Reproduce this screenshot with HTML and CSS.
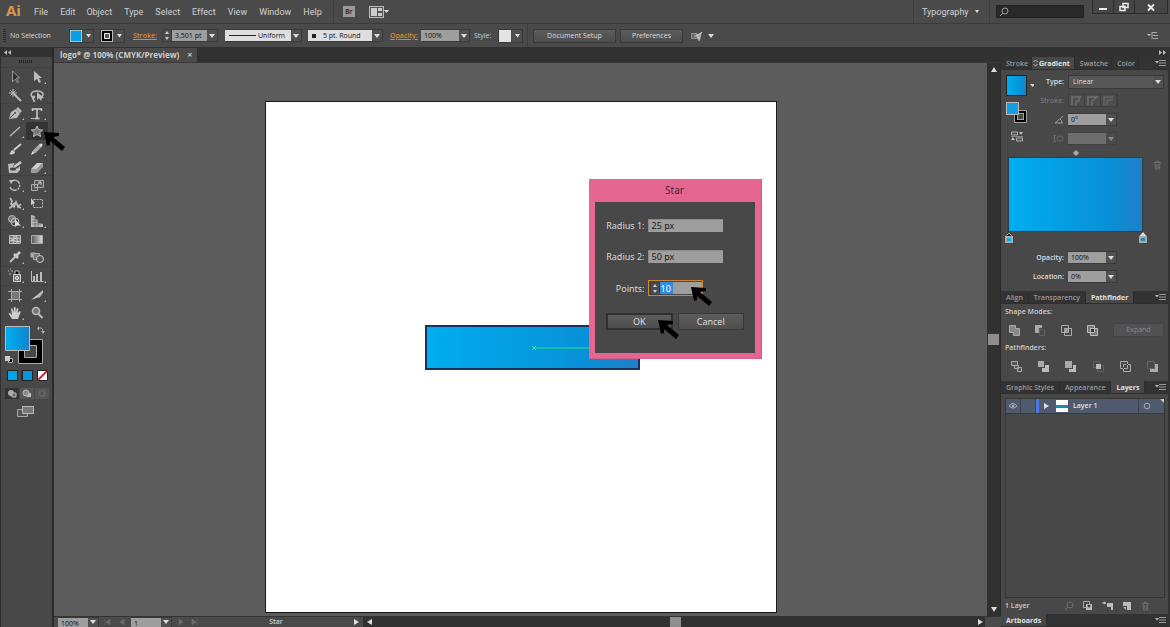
FILE: index.html
```html
<!DOCTYPE html>
<html lang="en">
<head>
<meta charset="utf-8">
<title>logo* @ 100% (CMYK/Preview)</title>
<link rel="stylesheet" href="styles.css">
</head>
<body>
<svg class="defs" aria-hidden="true">
  <defs>
    <linearGradient id="sky" x1="0" x2="1" y1="0" y2="0"><stop offset="0" stop-color="#00aeef"/><stop offset=".75" stop-color="#0890d8"/><stop offset="1" stop-color="#2080c6"/></linearGradient>
    <linearGradient id="grey" x1="0" x2="1" y1="0" y2="0"><stop offset="0" stop-color="#555"/><stop offset="1" stop-color="#ddd"/></linearGradient>
    <symbol id="pointer" viewBox="0 0 22 19"><path d="M0 0L15 1V4L9 5L21 15L18 19L6 9L6 13L3 14Z" fill="#000"/></symbol>
    <symbol id="panel-menu" viewBox="0 0 11 8"><path d="M0 2h4L2 4.500z" fill="#bbb"/><path d="M4 1.500h7M4 4h7M4 6.500h7" stroke="#999" fill="none"/></symbol>
    <symbol id="trash" viewBox="0 0 9 10"><path d="M1 2.500h7M3.500 2V1h2v1M2 3l.5 6h4L7 3M3.700 4v4M5.300 4v4" fill="none" stroke="#6b6b6b"/></symbol>
  </defs>
</svg>
<div class="app">
  <header class="menubar">
    <span class="brand">Ai</span>
    <nav class="menus">
      <button>File</button><button>Edit</button><button>Object</button><button>Type</button><button>Select</button><button>Effect</button><button>View</button><button>Window</button><button>Help</button>
    </nav>
    <i class="rule"></i>
    <button class="bridge" aria-label="Bridge">Br</button>
    <button class="arrange" aria-label="Arrange documents"><svg width="20" height="12"><rect x=".5" y=".5" width="14" height="11" fill="#555" stroke="#bbb"/><path d="M2 2h6v8H2zM9 2h4v3H9zM9 7h4v3H9z" fill="#ccc"/><path d="M15 4h5l-2.500 3z" fill="#ddd"/></svg></button>
    <span class="spring"></span>
    <i class="rule"></i>
    <select class="workspace" aria-label="Workspace"><option>Typography</option></select>
    <i class="rule"></i>
    <label class="search"><svg width="10" height="10"><circle cx="6" cy="4" r="3" fill="none" stroke="#999"/><path d="M4 6L1 9" stroke="#999"/></svg><input type="search" aria-label="Search"></label>
    <div class="window-buttons">
      <button aria-label="Minimize"><svg width="20" height="12"><path d="M6 7h8v2H6z" fill="#eee"/></svg></button>
      <button aria-label="Restore"><svg width="20" height="12"><path d="M9 2.500h5v4H9zM6 5.500h5v4H6z" fill="#454545" stroke="#eee" stroke-width="1.500"/></svg></button>
      <button class="close" aria-label="Close"><svg width="32" height="12"><path d="M13 3.500l6 6M19 3.500l-6 6" stroke="#eee" stroke-width="1.800"/></svg></button>
    </div>
  </header>

  <div class="control-bar">
    <i class="grip"></i>
    <span class="status-label">No Selection</span>
    <button class="swatch-drop" aria-label="Fill"><span class="swatch blue"></span></button>
    <button class="swatch-drop stroke-drop" aria-label="Stroke color"><svg width="12" height="12"><path d="M0 0h12v12H0z" fill="#bbb"/><path d="M1 1h10v10H1z" fill="#000"/><path d="M3.500 3.500h5v5h-5z" fill="#555" stroke="#eee"/></svg></button>
    <label class="link stroke-link" for="stroke-weight">Stroke:</label>
    <span class="stepper"><i class="up"></i><i class="down"></i></span>
    <select id="stroke-weight" class="field weight"><option>3.501 pt</option></select>
    <div class="profile line"><select class="field light" aria-label="Width profile"><option>Uniform</option></select></div>
    <div class="profile dot"><select class="field light" aria-label="Brush"><option>5 pt. Round</option></select></div>
    <label class="link opacity-link" for="opacity">Opacity:</label>
    <select id="opacity" class="field opacity"><option>100%</option></select>
    <span class="style-label">Style:</span>
    <button class="swatch-drop" aria-label="Style"><span class="swatch white"></span></button>
    <i class="rule after-style"></i>
    <button class="push setup">Document Setup</button>
    <button class="push prefs">Preferences</button>
    <button class="similar" aria-label="Select similar"><svg width="24" height="12"><path d="M1.500 3.500h6v5h-6z" fill="#666" stroke="#aaa" stroke-dasharray="2 1"/><path d="M6 4h3l3-2-1 4-1 4-3-1z" fill="#aaa"/><path d="M4 6h5M8 5l4-3M9 7v4" stroke="#ccc"/><path d="M18 4h6l-3 4z" fill="#ddd"/></svg></button>
    <span class="spring"></span>
    <button class="bar-menu" aria-label="Control bar options"><svg width="11" height="9"><path d="M0 3h4L2 5z" fill="#ccc"/><path d="M5 1v7M5 1.500h5M6 4.500h5M6 7.500h5" stroke="#aaa"/></svg></button>
  </div>

  <div class="workarea">
    <aside class="tools">
      <div class="dock-head"><svg width="8" height="5"><path d="M3 0v5L0 2.500zM7 0v5L4 2.500z" fill="#bbb"/></svg></div>
      <i class="tool-grip"></i>
      <div class="group">
        <button class="tool" aria-label="Selection"><svg viewBox="0 0 22 18"><path d="M8.500 3v11l3-3 2 4 1-1-2-4h3z" fill="#2c2c2c" stroke="#999"/></svg></button>
        <button class="tool more" aria-label="Direct selection"><svg viewBox="0 0 22 18"><path d="M8 3v10l3-2 2 4 2-1-2-4h3z" fill="#bbb"/></svg></button>
        <button class="tool" aria-label="Magic wand"><svg viewBox="0 0 22 18"><path d="M10 8l7 7" stroke="#bbb" stroke-width="2"/><path d="M9 3v8M5 7h8M6.500 4.500l5 5M11.500 4.500l-5 5" stroke="#bbb"/></svg></button>
        <button class="tool" aria-label="Lasso"><svg viewBox="0 0 22 18"><path d="M8 12C3 10 5 5 11 5s8 4 4 6M8 12c2-3-3-2-1 1s2 2 0 2" fill="none" stroke="#bbb" stroke-width="1.500"/><path d="M11 6v8l2-2L15 15l1-3h2z" fill="#bbb"/></svg></button>
      </div>
      <div class="group">
        <button class="tool more" aria-label="Pen"><svg viewBox="0 0 22 18"><path d="M5 15L7 8l5-3 4 4-3 5z" fill="#bbb"/><path d="M13 4l4 4" stroke="#bbb" stroke-width="2.500"/><path d="M6 14l4-4" stroke="#444"/><circle cx="11" cy="9" r="1" fill="#444"/></svg></button>
        <button class="tool more" aria-label="Type"><svg viewBox="0 0 22 18"><path d="M6.500 7V5h9v2M11 5v9M8.500 14.500h5" stroke="#ccc" stroke-width="1.500" fill="none"/><path d="M5 14.500h3" stroke="#bbb"/></svg></button>
        <button class="tool more" aria-label="Line segment"><svg viewBox="0 0 22 18"><path d="M6 14L16 5" stroke="#bbb" stroke-width="1.300"/></svg></button>
        <button class="tool active" aria-label="Star"><svg viewBox="0 0 22 18"><path d="M11 4l1.700 3.600 4 .4-3 2.600.9 3.900L11 12.500l-3.600 2 .9-3.900-3-2.600 4-.4z" fill="#777" stroke="#bbb"/></svg><svg class="pointer" width="22" height="19"><use href="#pointer"/></svg></button>
        <button class="tool" aria-label="Paintbrush"><svg viewBox="0 0 22 18"><path d="M10 10l7-6" stroke="#ccc" stroke-width="2"/><path d="M5 14c2 0 1-4 4-4l2 2c0 2-3 3-6 2z" fill="#ccc"/></svg></button>
        <button class="tool more" aria-label="Pencil"><svg viewBox="0 0 22 18"><path d="M8 12l7-7" stroke="#aaa" stroke-width="3.500"/><path d="M5 15l1.500-4 2.500 2z" fill="#ddd"/><circle cx="15" cy="5" r="1.500" fill="#ddd"/></svg></button>
        <button class="tool" aria-label="Blob brush"><svg viewBox="0 0 22 18"><path d="M4 6l7-1-2 3 2 3 3-1 2-2v4l-3 3H5z" fill="#bbb"/><path d="M10 9l7-5" stroke="#ccc" stroke-width="2.500"/><ellipse cx="9" cy="11" rx="3" ry="1.500" fill="#444"/></svg></button>
        <button class="tool more" aria-label="Eraser"><svg viewBox="0 0 22 18"><path d="M5 11l6-6h6l-6 6z" fill="#ccc"/><path d="M5 11h6l6-6v4l-6 6H5z" fill="#999"/></svg></button>
      </div>
      <div class="group">
        <button class="tool more" aria-label="Rotate"><svg viewBox="0 0 22 18"><path d="M8 5a5 5 0 1 1-2 6" fill="none" stroke="#bbb" stroke-width="1.400" stroke-dasharray="9 1 2 1 2 1"/><path d="M5 4l5 0-3 4z" fill="#bbb"/></svg></button>
        <button class="tool more" aria-label="Scale"><svg viewBox="0 0 22 18"><path d="M8.500 4.500h9v7h-9zM5.500 8.500h6v6h-6z" fill="#555" stroke="#aaa"/><path d="M11 9l4-3M12 6h3v3" stroke="#ccc" fill="none"/></svg></button>
        <button class="tool more" aria-label="Width"><svg viewBox="0 0 22 18"><path d="M6 4l2 3-1 3 3 3 2-5 2 5 3-3M5 14c4 0 3-5 6-5s2 4 6 5" fill="none" stroke="#bbb" stroke-width="1.700"/></svg></button>
        <button class="tool" aria-label="Free transform"><svg viewBox="0 0 22 18"><path d="M7.500 5.500h9v8h-9z" fill="none" stroke="#bbb" stroke-dasharray="2 1"/><path d="M5 4v7l4-2z" fill="#ccc"/></svg></button>
        <button class="tool more" aria-label="Shape builder"><svg viewBox="0 0 22 18"><circle cx="8" cy="7" r="3.500" fill="#777" stroke="#bbb"/><circle cx="11" cy="10" r="4" fill="none" stroke="#bbb"/><path d="M11 7v8l2-2 4 1z" fill="#ddd"/></svg></button>
        <button class="tool more" aria-label="Perspective grid"><svg viewBox="0 0 22 18"><path d="M5 3l4 1v3l3 1v3l5 1v3H5z" fill="#bbb"/><path d="M6 6h4M6 9h6M6 12h9M9 4v11M12 8v7" stroke="#666" stroke-width=".7"/></svg></button>
      </div>
      <div class="group">
        <button class="tool" aria-label="Mesh"><svg viewBox="0 0 22 18"><path d="M5.500 5.500h11v8h-11z" fill="#777" stroke="#bbb"/><path d="M9 5c3 3-2 5 1 8M13 5c-3 3 2 5 0 8M6 8c4 3 6-2 10 1M6 11c4-2 6 2 10 0" stroke="#ddd" fill="none"/></svg></button>
        <button class="tool" aria-label="Gradient"><svg viewBox="0 0 22 18"><path d="M5.500 5.500h11v8h-11z" fill="url(#grey)" stroke="#aaa"/></svg></button>
        <button class="tool more" aria-label="Eyedropper"><svg viewBox="0 0 22 18"><path d="M6 14l6-6" stroke="#bbb" stroke-width="2"/><path d="M10 6l4 4M12 8l4-4" stroke="#ccc" stroke-width="2.500"/></svg></button>
        <button class="tool" aria-label="Blend"><svg viewBox="0 0 22 18"><path d="M4.500 4.500h5v5h-5z" fill="#aaa"/><path d="M7.500 5.500h6v6h-6z" fill="#777" stroke="#aaa"/><circle cx="14" cy="11" r="3.500" fill="#555" stroke="#ccc"/></svg></button>
      </div>
      <div class="group gap">
        <button class="tool more" aria-label="Symbol sprayer"><svg viewBox="0 0 22 18"><path d="M9.500 7.500h7v7h-7z" fill="#777" stroke="#ccc"/><path d="M11 7V4h4v3M4 4h1M7 4h2M5 7h2M6 2h1" stroke="#bbb"/><circle cx="13" cy="11" r="1.500" fill="none" stroke="#eee"/></svg></button>
        <button class="tool more" aria-label="Column graph"><svg viewBox="0 0 22 18"><path d="M5.500 4v10.500h12" fill="none" stroke="#bbb"/><path d="M7 9h2v5H7zM10 7h2v7h-2zM14 5h2v9h-2z" fill="#bbb"/></svg></button>
      </div>
      <div class="group gap">
        <button class="tool" aria-label="Artboard"><svg viewBox="0 0 22 18"><path d="M7.500 5.500h8v8h-8z" fill="#777"/><path d="M7.500 3v13M15.500 3v13M4 5.500h14M4 13.500h14" stroke="#aaa"/></svg></button>
        <button class="tool more" aria-label="Slice"><svg viewBox="0 0 22 18"><path d="M5 14l6-5 2 2z" fill="#ccc"/><path d="M11 9l6-5v3l-4 5z" fill="#bbb"/></svg></button>
        <button class="tool more" aria-label="Hand"><svg viewBox="0 0 22 18"><path d="M8 15L4.500 9.500l1.500-.5 2 2L7 4.500h1.500l1 4L10 3h1.500l.3 5 1.200-4 1.400.4L13.600 9l2-2 1.200.8L14 15z" fill="#ccc"/></svg></button>
        <button class="tool" aria-label="Zoom"><svg viewBox="0 0 22 18"><circle cx="10" cy="7" r="3.500" fill="#777" stroke="#bbb" stroke-width="1.500"/><path d="M12.500 10l4 4" stroke="#bbb" stroke-width="2.200"/></svg></button>
      </div>
      <svg class="fill-stroke" width="44" height="42" role="img" aria-label="Fill and stroke"><path d="M14.500 17.500h24v24h-24z" fill="#000" stroke="#aaa"/><path d="M20.500 23.500h12v12h-12z" fill="#484848" stroke="#aaa"/><path d="M1.500 4.500h24v24h-24z" fill="url(#sky)" stroke="#bbb"/><path d="M34 6h3q2 0 2 4" fill="none" stroke="#aaa"/><path d="M35 4v5l-2-2.500zM37 9h4l-2 3z" fill="#aaa"/><path d="M4.500 36.500h4v4h-4z" fill="#000" stroke="#aaa"/><path d="M1 34h5v5H1z" fill="#ccc"/></svg>
      <div class="paint-modes">
        <button aria-label="Color"><svg width="11" height="11"><path d="M.5.500h10v10H.5z" fill="#00a4e8" stroke="#222"/></svg></button>
        <button class="on" aria-label="Gradient"><svg width="11" height="11"><path d="M.5.500h10v10H.5z" fill="#0897dc" stroke="#222"/></svg></button>
        <button aria-label="None"><svg width="11" height="11"><path d="M.5.500h10v10H.5z" fill="#fff" stroke="#222"/><path d="M1 10l9-9" stroke="#c82a3a" stroke-width="2"/></svg></button>
      </div>
      <div class="draw-modes">
        <button class="on" aria-label="Draw normal"><svg width="14" height="11"><circle cx="6" cy="5" r="3" fill="#aaa"/><path d="M7 5h4v4H7z" fill="#666" stroke="#bbb"/></svg></button>
        <button aria-label="Draw behind"><svg width="14" height="11"><path d="M7 5h4v4H7z" fill="#bbb"/><circle cx="6" cy="5" r="3" fill="#888" stroke="#bbb"/></svg></button>
        <button aria-label="Draw inside" disabled><svg width="14" height="11"><circle cx="7" cy="5.500" r="3" fill="none" stroke="#707070"/></svg></button>
      </div>
      <button class="screen-mode" aria-label="Screen mode"><svg width="17" height="13"><path d="M.5 4.500h10v7H.5z" fill="#555" stroke="#aaa"/><path d="M5.500 1.500h11v7h-11z" fill="#777" stroke="#bbb"/></svg></button>
    </aside>

    <main class="document">
      <div class="doc-tabs"><div class="doc-tab">logo* @ 100% (CMYK/Preview)<button aria-label="Close document">×</button></div></div>
      <div class="stage">
        <div class="canvas">
          <div class="artboard">
            <svg class="shape" width="216" height="46"><path d="M1 1h213v43H1z" fill="url(#sky)" stroke="#1b2f5c" stroke-width="2"/><path d="M109 23h60" stroke="#1cc8a0" stroke-width="1.500"/><path d="M107 21l4 4M111 21l-4 4" stroke="#3ddc84"/></svg>
            <form class="dialog" role="dialog" aria-labelledby="dialog-title">
              <h1 id="dialog-title">Star</h1>
              <div class="dialog-body">
                <div class="row"><label for="r1">Radius 1:</label><input id="r1" value="25 px"></div>
                <div class="row"><label for="r2">Radius 2:</label><input id="r2" value="50 px"></div>
                <div class="row"><label for="pts">Points:</label><div class="spin"><span class="stepper"><i class="up"></i><i class="down"></i></span><label class="spin-value" for="pts"><input id="pts" value="10"></label></div></div>
                <div class="actions"><button type="button" class="push ok">OK</button><button type="button" class="push">Cancel</button></div>
              </div>
              <svg class="pointer at-points" width="22" height="19"><use href="#pointer"/></svg>
              <svg class="pointer at-ok" width="22" height="19"><use href="#pointer"/></svg>
            </form>
          </div>
        </div>
        <div class="vscroll"><i class="tri north"></i><i class="thumb"></i><i class="tri south"></i></div>
      </div>
      <footer class="statusbar">
        <select class="field" aria-label="Zoom level"><option>100%</option></select>
        <svg class="nav" width="22" height="10"><path d="M1 2v6M6 2v6L2 5zM20 2v6l-4-3z" fill="#6c6c6c" stroke="#6c6c6c" stroke-width=".6"/></svg>
        <select class="field" aria-label="Artboard"><option>1</option></select>
        <svg class="nav" width="22" height="10"><path d="M2 2v6l4-3zM15 2v6l4-3zM20 2v6" fill="#6c6c6c" stroke="#6c6c6c" stroke-width=".6"/></svg>
        <span class="current-tool">Star</span>
        <i class="tri east"></i>
        <div class="hscroll"><i class="tri west"></i><i class="thumb"></i><i class="tri east"></i></div>
      </footer>
    </main>

    <aside class="panels">
      <div class="dock-head right"><svg width="8" height="5"><path d="M0 0v5l3-2.500zM4 0v5l3-2.500z" fill="#bbb"/></svg></div>
      <div class="tabs t-gradient"><button>Stroke</button><button class="on"><svg width="5" height="8"><path d="M.5 3l2-2 2 2M.5 5l2 2 2-2" fill="none" stroke="#bbb"/></svg>Gradient</button><button>Swatche</button><button>Color</button><svg class="pm" width="11" height="8"><use href="#panel-menu"/></svg></div>
      <section class="gradient-panel">
        <div class="settings">
          <div class="side">
            <svg width="28" height="22"><path d="M.5.500h20v20H.5z" fill="url(#sky)" stroke="#222"/><path d="M24 9h5l-2.500 3z" fill="#ddd"/></svg>
            <svg width="28" height="21"><path d="M10 10h9v9h-9z" fill="none" stroke="#bbb" stroke-width="3.500"/><path d="M10 10h9v9h-9z" fill="none" stroke="#000" stroke-width="2"/><path d="M.5.500h12v12H.5z" fill="#12a0e0" stroke="#bbb"/></svg>
            <svg class="reverse" width="12" height="11"><path d="M.5 1h6v3h-6zM5.500 7h6v3h-6z" fill="#555" stroke="#aaa"/><path d="M8 1h4l-2 3zM0 9h4L2 6z" fill="#bbb"/><path d="M0 5.500h12" stroke="#888"/></svg>
          </div>
          <div class="rows">
            <div class="prow"><label for="gtype">Type:</label><select id="gtype" class="field dark"><option>Linear</option></select></div>
            <div class="prow dim"><span class="lbl">Stroke:</span><div class="trio"><button disabled aria-label="Within stroke"><svg width="15" height="11"><path d="M3 10V2h9M7 10V6h3V2" fill="none" stroke="#6e6e6e" stroke-width="1.500"/></svg></button><button disabled aria-label="Along stroke"><svg width="15" height="11"><path d="M3 10V2h9L7 6v4" fill="none" stroke="#6e6e6e" stroke-width="1.500"/></svg></button><button disabled aria-label="Across stroke"><svg width="15" height="11"><path d="M3 10V2h9M6 10V5h6" fill="none" stroke="#6e6e6e"/></svg></button></div></div>
            <div class="prow"><label for="angle" aria-label="Angle"><svg width="10" height="9"><path d="M9 1L1 8h8M6 4q2 1 2 4" fill="none" stroke="#999"/></svg></label><select id="angle" class="field small"><option>0°</option></select></div>
            <div class="prow dim"><label for="ratio" aria-label="Aspect ratio"><svg width="11" height="9"><path d="M1.500 1v7M0 2l1.500-1L3 2M0 7l1.500 1L3 7" fill="none" stroke="#6a6a6a"/><ellipse cx="7" cy="4.500" rx="3" ry="2.500" fill="none" stroke="#6a6a6a"/></svg></label><select id="ratio" class="field small off" disabled><option></option></select></div>
          </div>
        </div>
        <div class="ramp">
          <svg class="mid" width="8" height="8"><path d="M4 1l3 3-3 3-3-3z" fill="#aaa"/></svg>
          <div class="bar"></div>
          <svg class="bin" width="9" height="10"><use href="#trash"/></svg>
          <div class="stops"><svg width="8" height="11"><path d="M1 4l3-3 3 3" fill="#222" stroke="#999"/><path d="M1 5h6v5H1z" fill="#00aeef" stroke="#aaa" stroke-width="2"/></svg><svg width="8" height="11"><path d="M.5 4L4 0l3.500 4z" fill="#ddd"/><path d="M1 5h6v5H1z" fill="#1c80c8" stroke="#aaa" stroke-width="2"/></svg></div>
        </div>
        <div class="prow wide"><label for="gop">Opacity:</label><select id="gop" class="field small"><option>100%</option></select></div>
        <div class="prow wide"><label for="gloc">Location:</label><select id="gloc" class="field small"><option>0%</option></select></div>
      </section>

      <div class="tabs"><button>Align</button><button>Transparency</button><button class="on">Pathfinder</button><svg class="pm" width="11" height="8"><use href="#panel-menu"/></svg></div>
      <section class="pathfinder">
        <h2>Shape Modes:</h2>
        <div class="modes">
          <button aria-label="Unite"><svg width="11" height="11"><path d="M.5.500h6v3h4v7h-6v-3h-4z" fill="#888" stroke="#aaa"/></svg></button>
          <button aria-label="Minus front"><svg width="11" height="11"><path d="M.5.500h6v2h-3v5h-3z" fill="#aaa" stroke="#aaa"/><path d="M4.500 4.500h5v6h-5z" fill="none" stroke="#606060"/></svg></button>
          <button aria-label="Intersect"><svg width="11" height="11"><path d="M.5.500h7v7h-7zM3.500 3.500h7v7h-7z" fill="none" stroke="#aaa"/><path d="M4 4h3v3H4z" fill="#999"/></svg></button>
          <button aria-label="Exclude"><svg width="11" height="11"><path d="M.5.500h7v7h-7zM3.500 3.500h7v7h-7z" fill="#777" stroke="#bbb"/><path d="M4 4h3v3H4z" fill="#333"/></svg></button>
          <button class="push expand" disabled>Expand</button>
        </div>
        <h2>Pathfinders:</h2>
        <div class="finders">
          <button aria-label="Divide"><svg width="11" height="11"><path d="M.5.500h6v4h-6zM3.500 4.500h4v3h-4zM6.500 6.500h4v4h-4z" fill="#555" stroke="#aaa"/></svg></button>
          <button aria-label="Trim"><svg width="11" height="11"><path d="M0 0h6v6H0z" fill="#aaa"/><path d="M7 4h4v7H4V7h3z" fill="#bbb"/></svg></button>
          <button aria-label="Merge"><svg width="11" height="11"><path d="M0 0h7v7H0z" fill="#aaa"/><path d="M8 4h3v7H4V8h4z" fill="#bbb"/></svg></button>
          <button aria-label="Crop"><svg width="11" height="11"><path d="M.5.500h6v6h-6zM4.500 4.500h6v6h-6z" fill="none" stroke="#606060"/><path d="M3 3h5v5H3z" fill="#bbb"/></svg></button>
          <button aria-label="Outline"><svg width="11" height="11"><path d="M3 7.500H.5v-7h7V3M7.500 4v3.500H4M3.500 6V3.500H6M8 3.500h2.500v7h-7V8" fill="none" stroke="#aaa"/></svg></button>
          <button aria-label="Minus back"><svg width="11" height="11"><path d="M.5.500h7v7h-7z" fill="none" stroke="#666"/><path d="M8 3h3v8H3V8h5z" fill="#aaa"/></svg></button>
        </div>
      </section>

      <div class="tabs"><button>Graphic Styles</button><button>Appearance</button><button class="on">Layers</button><svg class="pm" width="11" height="8"><use href="#panel-menu"/></svg></div>
      <section class="layers">
        <div class="layer-list">
          <div class="layer">
            <button class="eye" aria-label="Visibility"><svg width="10" height="8"><path d="M1 4q4-5 8 0-4 4-8 0z" fill="none" stroke="#aaa"/><circle cx="5" cy="4" r="1.300" fill="#aaa"/></svg></button>
            <i class="lock"></i><i class="tint"></i><i class="tri east"></i>
            <svg class="thumbnail" width="12" height="12"><path d="M0 0h12v12H0z" fill="#fff"/><path d="M0 5h12v3H0z" fill="#188cb0"/></svg>
            <span class="layer-name">Layer 1</span>
            <button class="target" aria-label="Target"><svg width="8" height="8"><circle cx="4" cy="4" r="2.800" fill="none" stroke="#aaa"/></svg></button>
            <svg class="corner" width="4" height="4"><path d="M0 0h4v4z" fill="#ccc"/></svg>
          </div>
        </div>
        <div class="layer-foot"><span>1 Layer</span>
          <svg width="10" height="10"><circle cx="6" cy="4" r="3" fill="none" stroke="#6c6c6c"/><path d="M4 6L1 9" stroke="#6c6c6c"/></svg>
          <svg width="10" height="10"><path d="M.5.500h6v6h-6z" fill="#444" stroke="#aaa"/><path d="M3 3h6v6H3z" fill="#bbb"/><circle cx="6" cy="5" r="1.500" fill="#444"/></svg>
          <svg width="11" height="10"><path d="M0 2h3M2 1l2 1-2 1z" stroke="#bbb" fill="#bbb"/><path d="M5 2h6v7H9V6H5z" fill="#bbb"/></svg>
          <svg width="10" height="10"><path d="M1 1h8v8H5V5H1z" fill="#bbb"/><path d="M1 6h3v3z" fill="#aaa"/></svg>
          <svg width="9" height="10"><use href="#trash"/></svg>
        </div>
      </section>
      <div class="tabs"><button class="on">Artboards</button><svg class="pm" width="11" height="8"><use href="#panel-menu"/></svg></div>
    </aside>
  </div>
</div>
</body>
</html>
```

FILE: styles.css
```css
* { box-sizing: border-box; }
body { margin: 0; background: #484848; }
button, input, select { font: inherit; color: inherit; margin: 0; padding: 0; border: 0; background: none; border-radius: 0; outline: 0; }
button { display: flex; align-items: center; justify-content: center; white-space: nowrap; }
svg { display: block; flex: none; }
.defs { position: absolute; width: 0; height: 0; }

.app { height: 100vh; min-width: 900px; display: flex; flex-direction: column; overflow: hidden; color: #ccc; font: 7px/10px "Open Sans", "Noto Sans", sans-serif; }
.spring { flex: 1; }
.rule { width: 1px; align-self: stretch; background: #3e3e3e; }

/* Menu bar */
.menubar { height: 23px; flex: none; display: flex; align-items: center; background: #4a4a4a; font: 9px/12px Roboto, "Noto Sans", sans-serif; color: #d0d0d0; }
.brand { width: 28px; padding: 0 0 3px 6px; font: bold 15px/18px "Open Sans", sans-serif; color: #d9994a; }
.menus { display: flex; gap: 12px; padding: 0 10px 0 6px; }
.menus button:nth-child(n+3) { margin-left: -1px; margin-right: 1px; }
.bridge { margin: 0 14px 0 9px; width: 12px; height: 11px; background: #999; color: #333; font-size: 7px; font-weight: bold; }
.workspace { appearance: none; width: 75px; padding-left: 8px; background: url("data:image/svg+xml,%3Csvg xmlns='http://www.w3.org/2000/svg' width='4' height='3'%3E%3Cpath d='M0 0h4L2 3z' fill='%23ddd'/%3E%3C/svg%3E") no-repeat right 10px center; }
.search { display: flex; align-items: center; gap: 2px; width: 88px; height: 13px; margin: 0 8px 0 6px; padding: 0 2px; background: #292929; border: 1px solid #222; }
.search input { width: 100%; min-width: 0; }
.window-buttons { display: flex; align-self: flex-start; height: 14px; margin-right: 2px; border: 1px solid #2c2c2c; border-top: 0; background: #454545; }
.window-buttons button + button { border-left: 1px solid #2c2c2c; }

/* Control bar */
.control-bar { height: 24px; flex: none; display: flex; align-items: center; background: #4a4a4a; border-top: 1px solid #3b3b3b; }
.control-bar > * { flex: none; }
.control-bar > .spring { flex: 1; }
.grip { width: 3px; height: 14px; margin: 0 4px 0 3px; background: repeating-linear-gradient(#2c2c2c 0 1px, #4a4a4a 1px 2px); }
.status-label { width: 59px; color: #ddd; }
.swatch-drop { width: 25px; height: 14px; justify-content: flex-start; border: 1px solid #383838; background: url("data:image/svg+xml,%3Csvg xmlns='http://www.w3.org/2000/svg' width='5' height='4'%3E%3Cpath d='M0 0h5L2.500 3.500z' fill='%23ddd'/%3E%3C/svg%3E") no-repeat right 2px center #4e4e4e; }
.swatch { width: 12px; height: 12px; }
.swatch.blue { background: #0a9fe6; border: 1px solid #9cc; }
.swatch.white { background: #e4e4e4; }
.stroke-drop { margin: 0 8px 0 6px; }
.link { color: #d98a35; text-decoration: underline; }
.stroke-link { width: 29px; font-weight: 600; }
.opacity-link { width: 31px; margin-left: 7px; font-weight: 600; }
.stepper { display: flex; flex-direction: column; align-items: center; justify-content: center; gap: 3px; width: 10px; height: 13px; border: 1px solid #3c3c3c; background: #4c4c4c; }
.up, .down { border: 2px solid transparent; }
.up { border-top: 0; border-bottom: 3px solid #ccc; }
.down { border-bottom: 0; border-top: 3px solid #ccc; }
.field { appearance: none; height: 13px; padding-left: 3px; font: 7px/11px "Open Sans", "Noto Sans", sans-serif; color: #111; border: 1px solid #3a3a3a; border-left: 0;
  background: url("data:image/svg+xml,%3Csvg xmlns='http://www.w3.org/2000/svg' width='6' height='4'%3E%3Cpath d='M0 0h6L3 4z' fill='%23ddd'/%3E%3C/svg%3E") no-repeat right 2px center, linear-gradient(#505050, #505050) no-repeat right / 10px 100%, #9e9e9e; }
.field.weight { width: 46px; margin-right: 7px; }
.field.opacity { width: 49px; }
.field.light { width: 100%; background-color: #dedede; }
.profile { position: relative; margin-right: 6px; }
.profile::before { content: ""; position: absolute; background: #222; }
.profile.line { width: 77px; }
.profile.line .field { padding-left: 33px; }
.profile.line::before { left: 4px; top: 6px; width: 27px; height: 1px; }
.profile.dot { width: 75px; margin-right: 0; }
.profile.dot .field { padding-left: 15px; }
.profile.dot::before { left: 4px; top: 5px; width: 4px; height: 4px; }
.style-label { width: 28px; padding-left: 4px; }
.after-style { margin: 0 5px 0 4px; }
.push { height: 14px; border: 1px solid #383838; background: linear-gradient(#5c5c5c, #4e4e4e); color: #ddd; }
.setup { width: 83px; margin-right: 4px; }
.prefs { width: 63px; margin-right: 7px; }
.bar-menu { margin-right: 12px; }

/* Work area */
.workarea { flex: 1; min-height: 0; display: flex; }
.dock-head { height: 10px; flex: none; display: flex; align-items: center; padding-left: 3px; background: #323232; }
.dock-head.right { justify-content: flex-end; padding-right: 1px; }

/* Tools */
.tools { position: relative; z-index: 2; width: 54px; flex: none; background: #484848; border-left: 1px solid #303030; border-right: 2px solid #2a2a2a; display: flex; flex-direction: column; }
.tool-grip { width: 14px; height: 3px; margin: 3px 0 5px 18px; background: repeating-linear-gradient(90deg, #222 0 1px, #484848 1px 2px); }
.group { display: grid; grid-template-columns: 22px 22px; padding-left: 3px; box-shadow: 0 -1px #424242; }
.group.gap { margin-top: 1px; }
.tool { position: relative; width: 22px; height: 18px; }
.tool > svg:first-child { width: 22px; height: 18px; }
.tool.more::after { content: ""; position: absolute; right: 2px; bottom: 2px; border: 1px solid #bbb; border-left-color: transparent; border-top-color: transparent; }
.tool.active { background: #333; }
.pointer { position: absolute; }
.tool .pointer { left: 18px; top: 10px; }
.fill-stroke { margin: 0 0 5px 3px; }
.paint-modes { display: flex; gap: 3px; margin: 1px 0 7px 5px; }
.paint-modes button { width: 12px; }
.paint-modes .on { background: #333; }
.draw-modes { display: flex; gap: 1px; margin: 0 0 6px 4px; }
.draw-modes button { background: #555; }
.draw-modes .on { background: #333; }
.screen-mode { align-self: flex-start; margin-left: 16px; }

/* Document */
.document { flex: 1; min-width: 0; display: flex; flex-direction: column; }
.doc-tabs { height: 16px; flex: none; display: flex; padding-top: 1px; background: #313131; border-bottom: 1px solid #383838; }
.doc-tab { display: flex; align-items: center; gap: 8px; padding: 0 5px 0 6px; background: #4a4a4a; font: bold 8px/12px "Open Sans", "Noto Sans", sans-serif; white-space: nowrap; }
.doc-tab button { font-size: 9px; line-height: 10px; }
.stage { flex: 1; min-height: 0; display: flex; }
.canvas { flex: 1; min-width: 0; overflow: hidden; display: flex; justify-content: center; align-items: flex-start; padding-top: 38px; background: #5c5c5c; }
.artboard { position: relative; flex: none; width: 512px; height: 512px; background: #fff; border: 1px solid #1a1a1a; }
.shape { position: absolute; left: 159px; top: 223px; }
.vscroll, .hscroll { display: flex; align-items: center; justify-content: space-between; background: #313131; }
.vscroll { width: 14px; flex: none; flex-direction: column; padding: 4px 0; border-right: 1px solid #2a2a2a; }
.vscroll .thumb, .hscroll .thumb { width: 11px; height: 11px; background: #8e8e8e; }
.tri { width: 0; height: 0; border: 3px solid transparent; }
.tri.north { border-top: 0; border-bottom: 5px solid #ddd; }
.tri.south { border-bottom: 0; border-top: 5px solid #ddd; }
.tri.east { border-right: 0; border-left: 5px solid #ddd; }
.tri.west { border-left: 0; border-right: 5px solid #ddd; }
.statusbar { height: 11px; flex: none; display: flex; align-items: center; padding-left: 4px; background: #4a4a4a; border-top: 1px solid #333; }
.statusbar .field { width: 41px; height: 11px; }
.nav { margin: 0 5px; }
.current-tool { width: 150px; padding-right: 6px; text-align: center; font-weight: 600; }
.hscroll { flex: 1; height: 11px; margin-left: 4px; padding: 0 2px 0 4px; margin-right: 16px; }

/* Dialog */
.dialog { position: absolute; left: 323px; top: 77px; width: 173px; padding: 0 6px 5px; background: #e56690; border: 1px solid #d85c86; border-width: 0 1px 1px 0; font: 9px/13px "Noto Sans", sans-serif; }
.dialog h1 { margin: 0; font: 10px/23px "Noto Sans", sans-serif; text-align: center; color: #4a2534; }
.dialog-body { background: #484848; padding: 17px 11px 23px 0; }
.row { display: flex; align-items: center; height: 13px; margin-bottom: 18px; }
.row:nth-child(3) { height: 14px; }
.row > label { width: 50px; margin-right: 3px; flex: none; text-align: right; white-space: nowrap; color: #d8d8d8; }
.row > input { width: 75px; height: 13px; padding: 0 0 2px 3px; background: #9e9e9e; border: 1px solid #8a8a8a; border-width: 1px 0 0 1px; color: #1c1c1c; }
.spin { display: flex; align-items: center; flex: none; height: 16px; width: 55px; padding-left: 1px; border: 1px solid #c98538; }
.spin-value { display: flex; flex: 1; height: 12px; background: #9e9e9e; }
.spin-value input { width: 13px; height: 12px; padding-left: 1px; background: #2f8de4; color: #fff; }
.actions { display: flex; gap: 5px; padding-left: 11px; }
.actions .push { flex: 1; height: 17px; }
.actions .ok { border: 2px solid #303030; }
.at-points { left: 102px; top: 108px; }
.at-ok { left: 69px; top: 141px; }

/* Panels */
.panels { width: 169px; flex: none; display: flex; flex-direction: column; background: #484848; border-right: 2px solid #333; }
.tabs { display: flex; height: 13px; flex: none; background: #333; color: #999; border-bottom: 1px solid #2e2e2e; }
.tabs button { padding: 0 5px; border-right: 1px solid #2c2c2c; font-size: 7px; font-weight: 600; line-height: 11px; }
.tabs .on { background: #484848; color: #e0e0e0; font-weight: bold; }
.t-gradient button { padding: 0 3px 0 5px; gap: 1px; }
.t-gradient button.on { padding: 0 4px 0 1px; }
.pm { margin: 2px 2px 0 auto; }
.gradient-panel { height: 221px; flex: none; padding: 2px 4px 0 5px; }
.settings { display: flex; }
.side { width: 28px; display: flex; flex-direction: column; gap: 5px; padding-top: 3px; }
.reverse { margin: 3px 0 0 5px; }
.rows { flex: 1; }
.prow { display: flex; align-items: center; height: 19px; }
.prow label, .lbl { display: flex; justify-content: flex-end; width: 30px; margin-right: 4px; flex: none; color: #ddd; font-weight: 600; }
.prow.wide label { width: 58px; }
.prow.dim .lbl { color: #777; }
.field.dark { flex: 1; height: 14px; padding-left: 4px; color: #ddd; border-left: 1px solid #3a3a3a; background-color: #575757; }
.field.small { width: 49px; }
.field.off { opacity: .45; }
.trio { display: flex; border: 1px solid #3e3e3e; }
.trio button { border-right: 1px solid #3e3e3e; background: #4e4e4e; }
.ramp { display: grid; grid-template-columns: 135px 1fr; margin: 1px 0 5px 2px; }
.mid { grid-column: 1 / -1; margin-left: 64px; }
.bar { height: 75px; border: 1px solid #29404e; background: linear-gradient(90deg, #00aeef, #0890d8 75%, #2080c6); }
.bin { margin: 3px 0 0 10px; }
.stops { display: flex; justify-content: space-between; margin: 0 -4px 0 -3px; }

.pathfinder { height: 77px; flex: none; padding: 3px 4px 0; }
.pathfinder h2 { margin: 0; font: 600 7px/10px "Open Sans", sans-serif; color: #ccc; }
.modes { display: flex; align-items: center; gap: 15px; height: 26px; padding-left: 4px; }
.expand { flex: 1; height: 14px; color: #888; background: #525252; border-color: #444; }
.finders { display: flex; justify-content: space-between; height: 26px; align-items: center; padding: 0 6px 0 6px; }

.layers { flex: 1; min-height: 0; display: flex; flex-direction: column; padding: 4px 3px 0 4px; }
.layer-list { flex: 1; border: 1px solid #363636; }
.layer { display: flex; align-items: center; height: 15px; background: #4f5b6d; border-bottom: 1px solid #3a3a3a; color: #e2e2e2; }
.eye { width: 14px; }
.lock { width: 16px; height: 14px; border: 1px solid #39424f; border-width: 0 1px; }
.tint { width: 3px; height: 14px; margin-right: 5px; background: #4a78e0; }
.thumbnail { margin: 0 5px 0 7px; }
.layer-name { flex: 1; font-weight: 600; }
.target { width: 22px; height: 14px; justify-content: flex-start; padding-left: 4px; border-left: 1px solid #39424f; }
.corner { align-self: flex-start; }
.layer-foot { display: flex; align-items: center; justify-content: space-between; height: 16px; padding-right: 15px; }
.layer-foot span { width: 50px; font-weight: 600; }
```
